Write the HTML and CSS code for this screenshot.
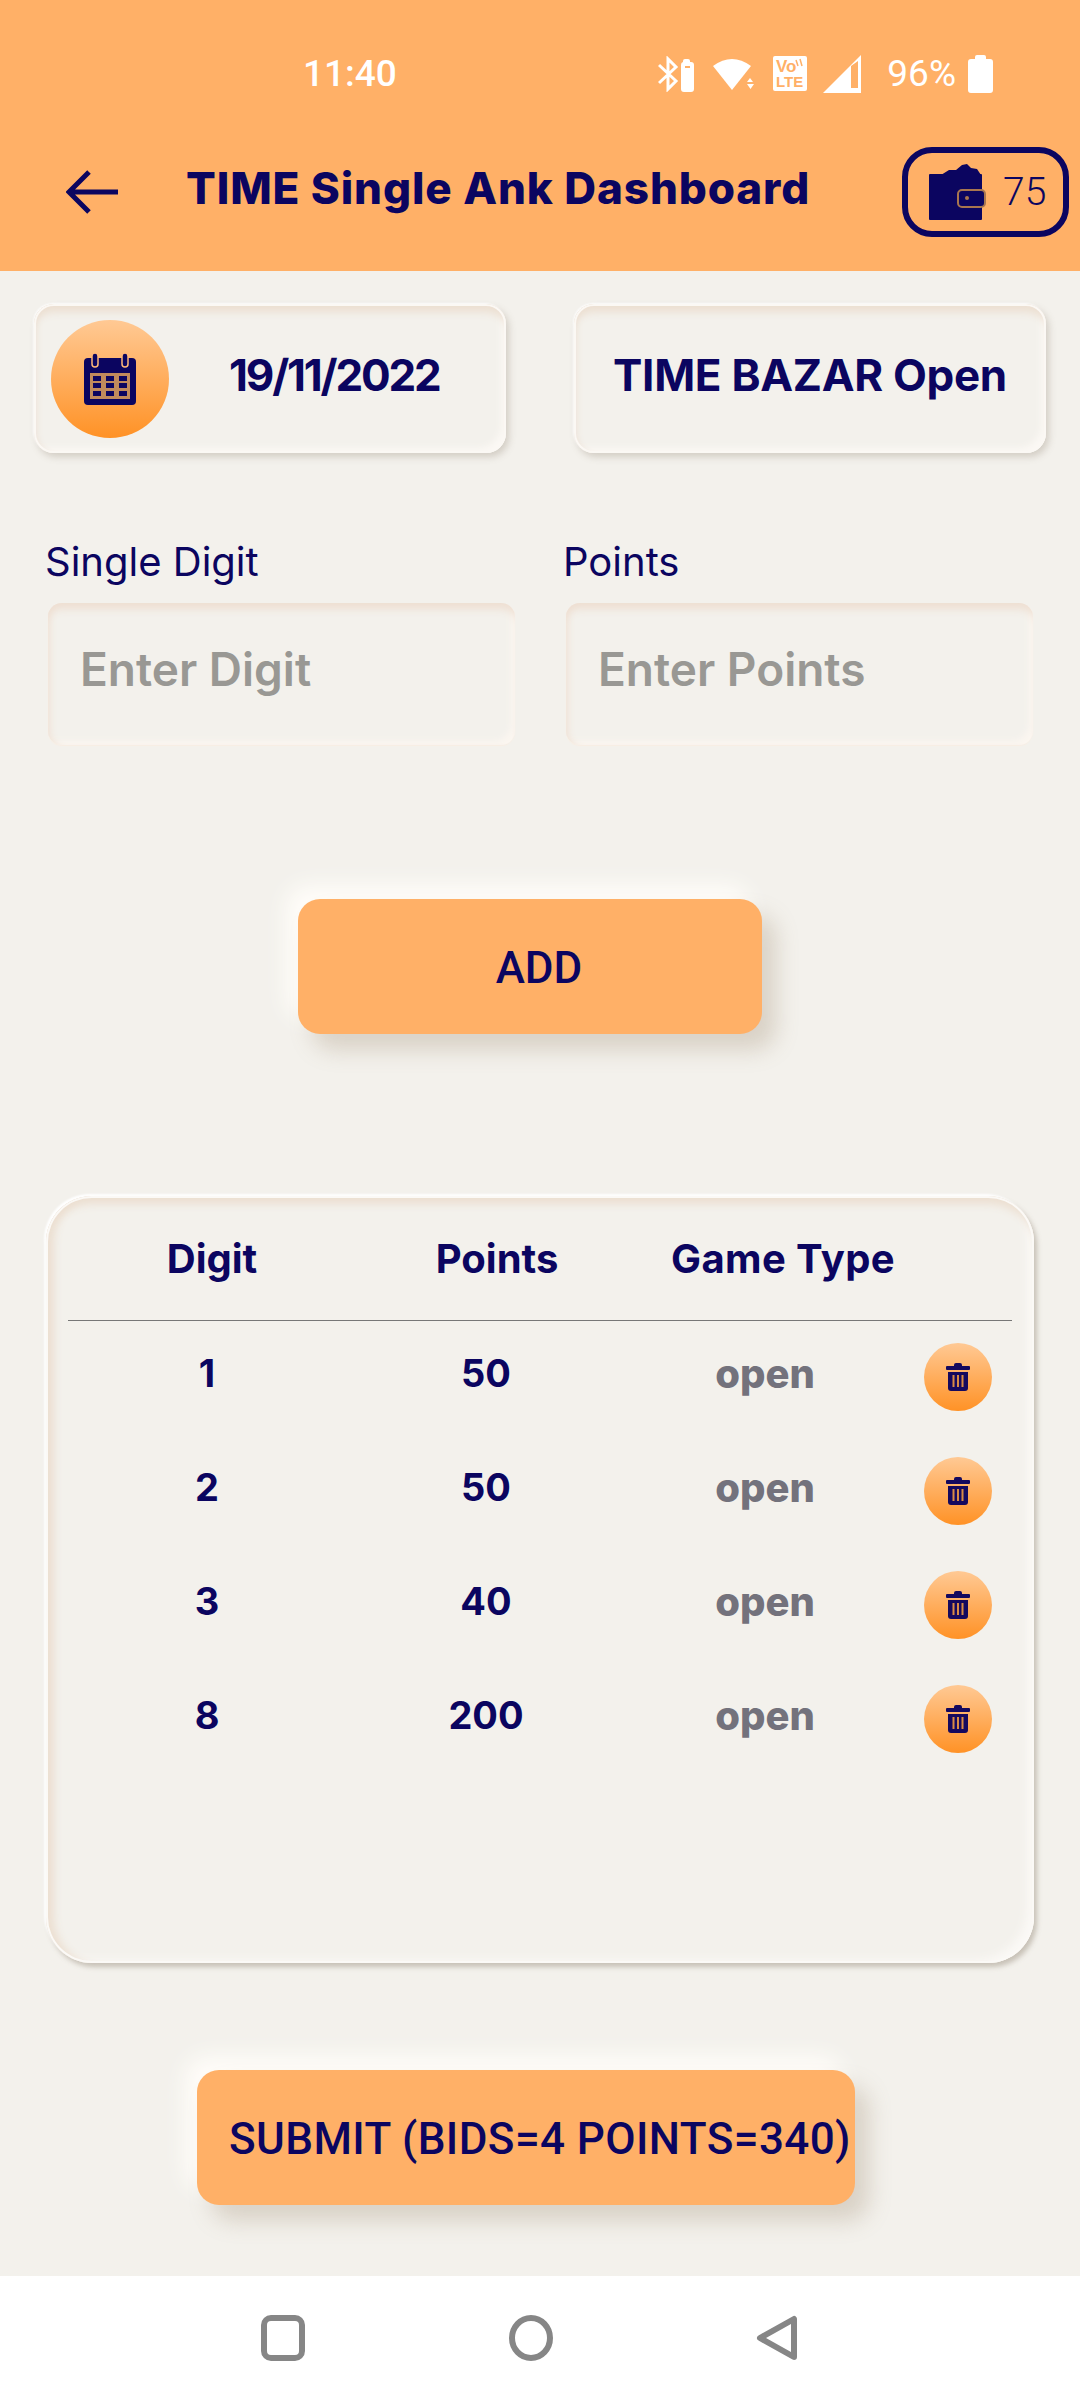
FILE: index.html
```html
<!DOCTYPE html>
<html lang="en">

<head>
    <meta charset="UTF-8">
    <meta name="viewport" content="width=device-width, initial-scale=1.0">
    <title>TIME Single Ank Dashboard</title>
    <link rel="stylesheet" href="styles.css">
</head>

<body>
    <header class="top">
        <!-- Status bar -->
        <div class="status">
            <span class="clock">11:40</span>
            <div class="status-icons">
                <svg class="ic-bt" width="36" height="36" viewBox="0 0 36 36">
                    <path d="M1 9 L18 25 L10 33 V3 L18 11 L1 27" fill="none" stroke="#fff" stroke-width="3" />
                    <path d="M25 5 a2 2 0 0 1 2 -2 h3 a2 2 0 0 1 2 2 v1 h1 a3 3 0 0 1 3 3 v24 a3 3 0 0 1 -3 3 h-7 a3 3 0 0 1 -3 -3 v-24 a3 3 0 0 1 2 -3 z" fill="#fff" />
                    <rect x="27" y="10" width="5" height="2" fill="#ffb067" />
                </svg>
                <svg class="ic-wifi" width="42" height="34" viewBox="0 0 42 34">
                    <path d="M0 9 Q19 -5 38 9 L19 33 Z" fill="#fff" />
                    <path d="M37 21 l3 4 h-6 z M34 27 h7 l-3.500 5 z" fill="#fff" />
                </svg>
                <svg class="ic-lte" width="34" height="35" viewBox="0 0 34 35">
                    <rect width="34" height="35" rx="2" fill="#fff" />
                    <text x="3" y="16" class="lte-vo">Vo</text>
                    <path d="M23 4 l2 6 M27 3 l2 7" stroke="#ffb067" stroke-width="1.500" />
                    <text x="3" y="31" class="lte-text">LTE</text>
                </svg>
                <svg class="ic-signal" width="38" height="38" viewBox="0 0 38 38">
                    <path d="M0 38 L38 0 V38 Z M28 11 V33 H35 V6 Z" fill="#fff" fill-rule="evenodd" />
                </svg>
                <span class="battery-text">96%</span>
                <svg class="ic-battery" width="25" height="38" viewBox="0 0 25 38">
                    <path d="M7 2 a2 2 0 0 1 2 -2 h7 a2 2 0 0 1 2 2 v2 h4 a3 3 0 0 1 3 3 v28 a3 3 0 0 1 -3 3 h-19 a3 3 0 0 1 -3 -3 v-28 a3 3 0 0 1 3 -3 h4 z" fill="#fff" />
                </svg>
            </div>
        </div>

        <!-- Toolbar -->
        <div class="toolbar">
            <svg class="back" width="52" height="44" viewBox="0 0 52 44">
                <path d="M52 22 H4 M23 2 L3 22 L23 42" fill="none" stroke="#0b0560" stroke-width="5" />
            </svg>
            <h1 class="title">TIME Single Ank Dashboard</h1>
            <div class="wallet">
                <svg width="57" height="56" viewBox="0 0 57 56">
                    <path d="M12 11 L20 6 L27 6 L33 1 L38 0 L42 4 L48 5 L52 11 Z" fill="#0b0560" />
                    <rect y="10" width="53" height="46" rx="1" fill="#0b0560" />
                    <rect x="29" y="26" width="27" height="17" rx="4" fill="#0b0560" stroke="#a8764f" stroke-width="2" />
                    <circle cx="38" cy="34" r="2" fill="#a8764f" />
                </svg>
                <span class="wallet-num">75</span>
            </div>
        </div>
    </header>

    <main class="page">
        <!-- Date and market -->
        <div class="info-row">
            <div class="raised date-card">
                <span class="round-ic cal-ic">
                    <svg width="52" height="52" viewBox="0 0 52 52">
                        <rect y="5" width="52" height="47" rx="4" fill="#0b0560" />
                        <rect x="8" y="0" width="6" height="14" rx="3" fill="#0b0560" stroke="#ffb878" stroke-width="1.500" />
                        <rect x="38" y="0" width="6" height="14" rx="3" fill="#0b0560" stroke="#ffb878" stroke-width="1.500" />
                        <rect x="6" y="20" width="40" height="26" fill="#c08a5c" />
                        <g fill="#0b0560">
                            <rect x="9" y="23" width="8" height="5" />
                            <rect x="22" y="23" width="8" height="5" />
                            <rect x="35" y="23" width="8" height="5" />
                            <rect x="9" y="30" width="8" height="5" />
                            <rect x="22" y="30" width="8" height="5" />
                            <rect x="35" y="30" width="8" height="5" />
                            <rect x="9" y="38" width="8" height="5" />
                            <rect x="22" y="38" width="8" height="5" />
                            <rect x="35" y="38" width="8" height="5" />
                        </g>
                    </svg>
                </span>
                <span class="info-text date-text">19/11/2022</span>
            </div>
            <div class="raised market-card">
                <span class="info-text market-text">TIME BAZAR Open</span>
            </div>
        </div>

        <!-- Inputs -->
        <div class="fields">
            <div class="field">
                <label class="field-label" for="digit">Single Digit</label>
                <input class="field-input" type="text" id="digit" placeholder="Enter Digit">
            </div>
            <div class="field">
                <label class="field-label" for="points">Points</label>
                <input class="field-input" type="text" id="points" placeholder="Enter Points">
            </div>
        </div>

        <div class="add-wrap">
            <button class="btn add-btn">ADD</button>
        </div>

        <!-- Bids table -->
        <section class="raised table-card">
            <div class="table-head">
                <span>Digit</span>
                <span>Points</span>
                <span class="head-type">Game Type</span>
            </div>
            <div class="bid-row">
                <span>1</span>
                <span>50</span>
                <span class="bid-type">open</span>
                <span class="round-ic del-ic"><svg width="24" height="28" viewBox="0 0 24 28"><use href="#trash" /></svg></span>
            </div>
            <div class="bid-row">
                <span>2</span>
                <span>50</span>
                <span class="bid-type">open</span>
                <span class="round-ic del-ic"><svg width="24" height="28" viewBox="0 0 24 28"><use href="#trash" /></svg></span>
            </div>
            <div class="bid-row">
                <span>3</span>
                <span>40</span>
                <span class="bid-type">open</span>
                <span class="round-ic del-ic"><svg width="24" height="28" viewBox="0 0 24 28"><use href="#trash" /></svg></span>
            </div>
            <div class="bid-row">
                <span>8</span>
                <span>200</span>
                <span class="bid-type">open</span>
                <span class="round-ic del-ic"><svg width="24" height="28" viewBox="0 0 24 28"><use href="#trash" /></svg></span>
            </div>
        </section>

        <div class="submit-wrap">
            <button class="btn submit-btn">SUBMIT (BIDS=4 POINTS=340)</button>
        </div>
    </main>

    <!-- Navigation bar -->
    <footer class="navbar">
        <svg width="44" height="46" viewBox="0 0 44 46">
            <rect x="3" y="3" width="38" height="40" rx="7" fill="none" stroke="#868686" stroke-width="6" />
        </svg>
        <svg width="44" height="46" viewBox="0 0 44 46">
            <ellipse cx="22" cy="23" rx="19" ry="20" fill="none" stroke="#868686" stroke-width="6" />
        </svg>
        <svg width="42" height="46" viewBox="0 0 42 46">
            <path d="M38 4 V42 L4 23 Z" fill="none" stroke="#868686" stroke-width="6" stroke-linejoin="round" />
        </svg>
    </footer>

    <svg class="defs" width="0" height="0">
        <symbol id="trash" viewBox="0 0 24 28">
            <path d="M8 2 a2 2 0 0 1 2 -2 h4 a2 2 0 0 1 2 2 v1 h7 a1 1 0 0 1 1 1 v2 a1 1 0 0 1 -1 1 h-22 a1 1 0 0 1 -1 -1 v-2 a1 1 0 0 1 1 -1 h7 z" fill="#15095e" />
            <path d="M2 9 h20 v16 a3 3 0 0 1 -3 3 h-14 a3 3 0 0 1 -3 -3 z" fill="#15095e" />
            <rect x="6.500" y="12" width="2" height="12" fill="#d98b45" />
            <rect x="11" y="12" width="2" height="12" fill="#d98b45" />
            <rect x="15.500" y="12" width="2" height="12" fill="#d98b45" />
        </symbol>
    </svg>
</body>

</html>
```

FILE: styles.css
```css
* {
    box-sizing: border-box;
}

body {
    margin: 0;
    width: 1080px;
    height: 2400px;
    display: flex;
    flex-direction: column;
    background-color: #f3f1ec;
    color: #0b0560;
    font-family: Inter, "Open Sans", sans-serif;
    overflow: hidden;
}

.defs {
    position: absolute;
}

/* Header */
.top {
    height: 271px;
    background-color: #ffb067;
}

.status {
    height: 147px;
    padding: 0 87px 0 303px;
    display: flex;
    align-items: center;
    justify-content: space-between;
    color: #fff;
    font-family: Roboto, sans-serif;
    font-size: 37px;
}

.clock {
    font-weight: 500;
}

.status-icons {
    display: flex;
    align-items: center;
}

.ic-wifi {
    margin-left: 19px;
}

.ic-lte {
    margin-left: 18px;
}

.ic-signal {
    margin-left: 16px;
}

.battery-text {
    margin-left: 26px;
}

.ic-battery {
    margin-left: 12px;
}

.lte-vo {
    font-family: "Liberation Sans", sans-serif;
    font-size: 17px;
    font-weight: 700;
    fill: #ffb067;
}

.lte-text {
    font-family: "Liberation Sans", sans-serif;
    font-size: 15px;
    font-weight: 700;
    fill: #ffb067;
}

.toolbar {
    display: flex;
    align-items: flex-start;
    padding-left: 66px;
}

.back {
    margin-top: 23px;
}

.title {
    margin: 11px 0 0 68px;
    width: 625px;
    font-size: 44px;
    line-height: 60px;
    font-weight: 800;
    letter-spacing: 0.9px;
    white-space: nowrap;
}

.wallet {
    margin-left: 91px;
    width: 167px;
    height: 90px;
    padding-left: 21px;
    display: flex;
    align-items: center;
    gap: 17px;
    border: 6px solid #0b0560;
    border-radius: 30px;
}

.wallet-num {
    font-family: Roboto, sans-serif;
    font-weight: 300;
    font-size: 39px;
}

/* Main */
.page {
    flex: 1;
}

.raised {
    background-color: #f3f1ec;
    box-shadow:
        inset 0 0 0 2px #fbf8f4,
        inset 0 13px 8px -5px #ecdfd1,
        inset 7px 0 6px -4px #eee3d8,
        inset -8px -8px 6px -3px #fbf8f4,
        3px 4px 7px rgba(120, 105, 85, 0.25),
        -1px -1px 2px #fff;
}

.info-row {
    display: flex;
    gap: 68px;
    padding: 33px 0 0 34px;
}

.date-card,
.market-card {
    width: 472px;
    height: 149px;
    border-radius: 20px;
    display: flex;
    align-items: center;
}

.date-card {
    padding-left: 17px;
}

.market-card {
    justify-content: center;
}

.round-ic {
    display: flex;
    align-items: center;
    justify-content: center;
    border-radius: 50%;
    background: linear-gradient(#ffc994, #ff9226);
    flex-shrink: 0;
}

.cal-ic {
    width: 118px;
    height: 118px;
}

.info-text {
    font-size: 44px;
    line-height: 50px;
    font-weight: 700;
    margin-top: -8px;
    white-space: nowrap;
}

.date-text {
    margin-left: 60px;
    letter-spacing: -2.2px;
}

.market-text {
    letter-spacing: -0.3px;
}

.fields {
    display: flex;
    gap: 51px;
    padding: 84px 0 0 48px;
}

.field {
    width: 467px;
}

.field-label {
    display: block;
    margin-left: -3px;
    font-size: 40px;
    line-height: 50px;
    font-weight: 400;
}

.field-input {
    display: block;
    width: 100%;
    height: 142px;
    margin-top: 16px;
    padding: 0 0 11px 32px;
    border: none;
    border-radius: 14px;
    outline: none;
    background-color: #f3f1ec;
    font-family: inherit;
    font-size: 46px;
    font-weight: 600;
    box-shadow:
        inset 0 11px 8px -5px #eedfd2,
        inset 7px 0 6px -4px #f1e5da,
        inset -7px -7px 6px -3px #fbf6f0,
        0 1px 1px #f8eee4;
}

.field-input::placeholder {
    color: #999894;
    opacity: 1;
}

.btn {
    display: block;
    height: 135px;
    border: none;
    border-radius: 22px;
    background-color: #ffb067;
    color: #0b0560;
    font-family: Roboto, sans-serif;
    font-size: 44px;
    font-weight: 500;
    box-shadow:
        14px 16px 22px rgba(150, 130, 100, 0.28),
        -12px -14px 22px #fffdf9;
}

.add-wrap {
    padding: 154px 0 0 298px;
}

.add-btn {
    width: 464px;
    padding: 3px 0 0 18px;
}

/* Table */
.table-card {
    width: 988px;
    height: 767px;
    margin: 162px 0 0 46px;
    padding: 0 22px;
    border-radius: 46px;
    box-shadow:
        inset 0 0 0 2px #fbf9f6,
        inset 0 13px 8px -5px #ecdfd1,
        inset 13px 0 8px -5px #ecdfd1,
        inset -12px -8px 10px -5px #fbf9f6,
        3px 4px 5px rgba(120, 105, 85, 0.35),
        -2px -2px 2px #fff;
}

.table-head,
.bid-row {
    display: grid;
    text-align: center;
}

.table-head {
    grid-template-columns: 288px 282px 290px;
    height: 125px;
    padding-top: 38px;
    border-bottom: 1px solid #777;
    font-size: 40px;
    line-height: 50px;
    font-weight: 700;
}

.head-type {
    letter-spacing: 0.4px;
}

.bid-row {
    grid-template-columns: 278px 280px 278px 68px;
    align-items: center;
    height: 68px;
    margin-top: 46px;
    font-size: 38px;
    font-weight: 700;
}

.table-head + .bid-row {
    margin-top: 22px;
}

.bid-row > span:not(.round-ic) {
    margin-top: -8px;
}

.bid-type {
    color: #73727c;
    font-size: 40px;
    font-weight: 800;
}

.del-ic {
    width: 68px;
    height: 68px;
    margin-left: 20px;
}

.submit-wrap {
    padding: 107px 0 0 197px;
}

.submit-btn {
    width: 658px;
    padding: 3px 0 0 32px;
    text-align: left;
    letter-spacing: 0.4px;
    white-space: nowrap;
    overflow: visible;
}

/* Navigation bar */
.navbar {
    height: 124px;
    padding: 0 282px 0 261px;
    display: flex;
    align-items: center;
    justify-content: space-between;
    background-color: #fff;
}
```
